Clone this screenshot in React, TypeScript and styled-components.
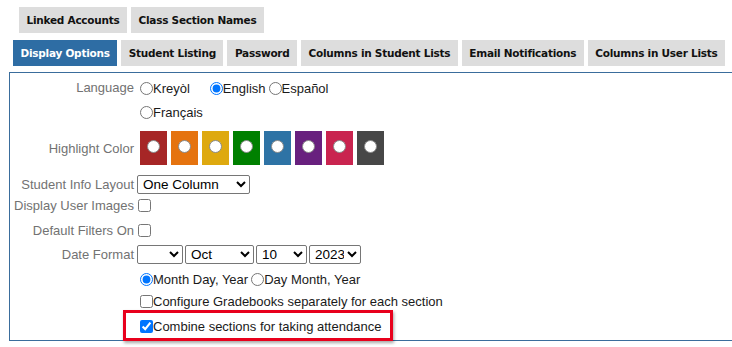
import * as React from "react";
import styled, { createGlobalStyle } from "styled-components";

const GlobalStyle = createGlobalStyle`
  html, body {
    margin: 0;
    padding: 0;
    background: #fff;
    overflow: hidden;
  }
  body {
    width: 732px;
    height: 347px;
  }
`;

const Page = styled.div`
  padding-top: 7px;
  width: 760px;
`;

const TabRow = styled.div<{ $indent: number; $gap: number }>`
  display: flex;
  gap: 4px;
  padding-left: ${(p) => p.$indent}px;
  margin-bottom: ${(p) => p.$gap}px;
`;

const Tab = styled.div<{ $active?: boolean }>`
  height: 26px;
  padding: 0 7.5px;
  display: flex;
  align-items: center;
  font-family: Verdana, "DejaVu Sans", sans-serif;
  font-weight: bold;
  font-size: 10.5px;
  letter-spacing: -0.25px;
  white-space: nowrap;
  background: ${(p) => (p.$active ? "#2e6da4" : "#dddddd")};
  color: ${(p) => (p.$active ? "#ffffff" : "#111111")};
`;

const Panel = styled.div`
  margin-left: 9px;
  border: 1px solid #3a6d9c;
  padding: 3px 0 2px 0;
  font-family: "Liberation Sans", Arial, sans-serif;
  font-size: 13px;
`;

const Row = styled.div<{ $h: number; $top?: boolean }>`
  display: grid;
  grid-template-columns: 124px 1fr;
  column-gap: 3px;
  height: ${(p) => p.$h}px;
  align-items: ${(p) => (p.$top ? "start" : "center")};
`;

const Label = styled.div<{ $lh?: number }>`
  text-align: right;
  color: #727272;
  white-space: nowrap;
  line-height: ${(p) => (p.$lh ? `${p.$lh}px` : "normal")};
`;

const Value = styled.div`
  display: flex;
  flex-direction: column;
  color: #1a1a1a;
`;

const Line = styled.div`
  display: flex;
  align-items: center;
  height: 24px;
  white-space: nowrap;
`;

const Choice = styled.label<{ $space?: number }>`
  display: inline-flex;
  align-items: center;
  margin-right: ${(p) => p.$space ?? 0}px;
  input {
    margin: 0 0 0 3px;
    width: 13px;
    height: 13px;
  }
`;

const Swatches = styled.div`
  display: flex;
  gap: 4px;
  padding-left: 3px;
`;

const Swatch = styled.label<{ $color: string }>`
  width: 27px;
  height: 34px;
  background: ${(p) => p.$color};
  display: flex;
  align-items: center;
  justify-content: center;
`;

const SwatchDot = styled.input`
  appearance: none;
  margin: 0 0 4px 0;
  width: 13px;
  height: 13px;
  border-radius: 50%;
  background: #fff;
  border: 1px solid #8a8a8a;
`;

const Select = styled.select<{ $w: number }>`
  width: ${(p) => p.$w}px;
  height: 19px;
  font-family: "Liberation Sans", Arial, sans-serif;
  font-size: 13.5px;
  color: #000;
  padding: 0 0 0 1px;
  margin: 0 2px 0 0;
  border: 1px solid #767676;
  border-radius: 2px;
  background: #fff;
`;

const Check = styled.input`
  margin: 0 0 0 1px;
  width: 13px;
  height: 13px;
`;

const Highlighted = styled.div`
  position: relative;
  &::after {
    content: "";
    position: absolute;
    left: -14px;
    top: -4px;
    width: 264px;
    height: 25px;
    border: 3px solid #e8001c;
    box-shadow: 1px 2px 3px rgba(0, 0, 0, 0.35);
    pointer-events: none;
  }
`;

const colors = ["#a62626", "#e5730f", "#dea90f", "#008000", "#2e73a5", "#68207e", "#c9244f", "#474747"];

const noop = () => {};

export default function App() {
  return (
    <>
      <GlobalStyle />
      <Page>
        <TabRow $indent={19} $gap={7}>
          <Tab>Linked Accounts</Tab>
          <Tab>Class Section Names</Tab>
        </TabRow>
        <TabRow $indent={13} $gap={6}>
          <Tab $active>Display Options</Tab>
          <Tab>Student Listing</Tab>
          <Tab>Password</Tab>
          <Tab>Columns in Student Lists</Tab>
          <Tab>Email Notifications</Tab>
          <Tab>Columns in User Lists</Tab>
        </TabRow>
        <Panel>
          <Row $h={48} $top>
            <Label $lh={24}>Language</Label>
            <Value>
              <Line>
                <Choice $space={17}>
                  <input type="radio" name="lang" />
                  Kreyòl
                </Choice>
                <Choice>
                  <input type="radio" name="lang" checked onChange={noop} />
                  English
                </Choice>
                <Choice>
                  <input type="radio" name="lang" />
                  Español
                </Choice>
              </Line>
              <Line>
                <Choice>
                  <input type="radio" name="lang" />
                  Français
                </Choice>
              </Line>
            </Value>
          </Row>
          <Row $h={48}>
            <Label>Highlight Color</Label>
            <Swatches>
              {colors.map((c) => (
                <Swatch key={c} $color={c}>
                  <SwatchDot type="radio" name="hl" />
                </Swatch>
              ))}
            </Swatches>
          </Row>
          <Row $h={21}>
            <Label>Student Info Layout</Label>
            <Value>
              <Line>
                <Select $w={113} defaultValue="one">
                  <option value="one">One Column</option>
                  <option value="two">Two Columns</option>
                </Select>
              </Line>
            </Value>
          </Row>
          <Row $h={25}>
            <Label>Display User Images</Label>
            <Value>
              <Line>
                <Check type="checkbox" />
              </Line>
            </Value>
          </Row>
          <Row $h={24}>
            <Label>Default Filters On</Label>
            <Value>
              <Line>
                <Check type="checkbox" />
              </Line>
            </Value>
          </Row>
          <Row $h={25}>
            <Label>Date Format</Label>
            <Value>
              <Line>
                <Select $w={46} defaultValue="">
                  <option value=""></option>
                </Select>
                <Select $w={69} defaultValue="Oct">
                  <option>Oct</option>
                </Select>
                <Select $w={51} defaultValue="10">
                  <option>10</option>
                </Select>
                <Select $w={52} defaultValue="2023">
                  <option>2023</option>
                </Select>
              </Line>
            </Value>
          </Row>
          <Row $h={22}>
            <span />
            <Value>
              <Line>
                <Choice>
                  <input type="radio" name="df" checked onChange={noop} />
                  Month Day, Year
                </Choice>
                <Choice>
                  <input type="radio" name="df" />
                  Day Month, Year
                </Choice>
              </Line>
            </Value>
          </Row>
          <Row $h={25}>
            <span />
            <Value>
              <Line>
                <Choice>
                  <input type="checkbox" />
                  Configure Gradebooks separately for each section
                </Choice>
              </Line>
            </Value>
          </Row>
          <Row $h={24}>
            <span />
            <Value>
              <Highlighted>
                <Line>
                  <Choice>
                    <input type="checkbox" checked onChange={noop} />
                    Combine sections for taking attendance
                  </Choice>
                </Line>
              </Highlighted>
            </Value>
          </Row>
        </Panel>
      </Page>
    </>
  );
}
